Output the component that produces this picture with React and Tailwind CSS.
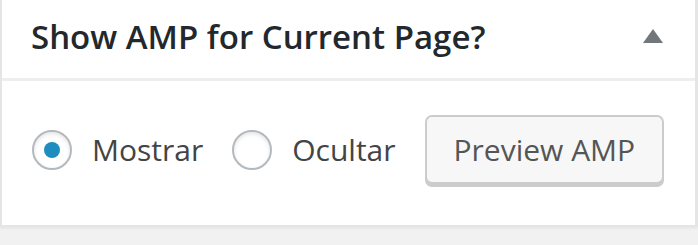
import React from "react";

const Radio = ({ checked, label }) => (
  <label className="flex items-center gap-[20px]">
    <span className="flex h-[40px] w-[40px] items-center justify-center rounded-full border-[2.5px] border-[#b4b9be] bg-white shadow-[inset_0_2px_4px_rgba(0,0,0,0.1)]">
      {checked && <span className="h-[16px] w-[16px] rounded-full bg-[#1e8cbe]" />}
    </span>
    <span className="text-[30px] leading-[40px] text-[#444]">{label}</span>
  </label>
);

const App = () => {
  return (
    <div
      className="h-[245px] w-[698px] bg-[#f1f1f1]"
      style={{ fontFamily: '"Open Sans", "Noto Sans", sans-serif' }}
    >
      <div className="border-l-[2px] border-r-[3px] border-b-[2px] border-[#e5e5e5] bg-white shadow-[0_2px_2px_rgba(0,0,0,0.04)]">
        <div className="flex h-[81px] items-start justify-between border-b-[3px] border-[#eeeeee] pl-[29px] pr-[32px]">
          <h2 className="pt-[20px] text-[33px] font-semibold leading-[33px] text-[#23282d]">
            Show AMP for Current Page?
          </h2>
          <svg className="mt-[29px]" width="20" height="14" viewBox="0 0 20 14">
            <path d="M10 0 L20 14 L0 14 Z" fill="#72777c" />
          </svg>
        </div>
        <div className="flex items-center pl-[30px] pt-[34px] pb-[41px]">
          <Radio checked label="Mostrar" />
          <div className="ml-[29px]">
            <Radio label="Ocultar" />
          </div>
          <button className="ml-[29px] h-[69px] rounded-[7px] border-[2.5px] border-[#cccccc] bg-[#f7f7f7] px-[27px] text-[30px] leading-[60px] text-[#555] shadow-[0_3px_0_#cccccc]">
            Preview AMP
          </button>
        </div>
      </div>
    </div>
  );
};

export default App;
